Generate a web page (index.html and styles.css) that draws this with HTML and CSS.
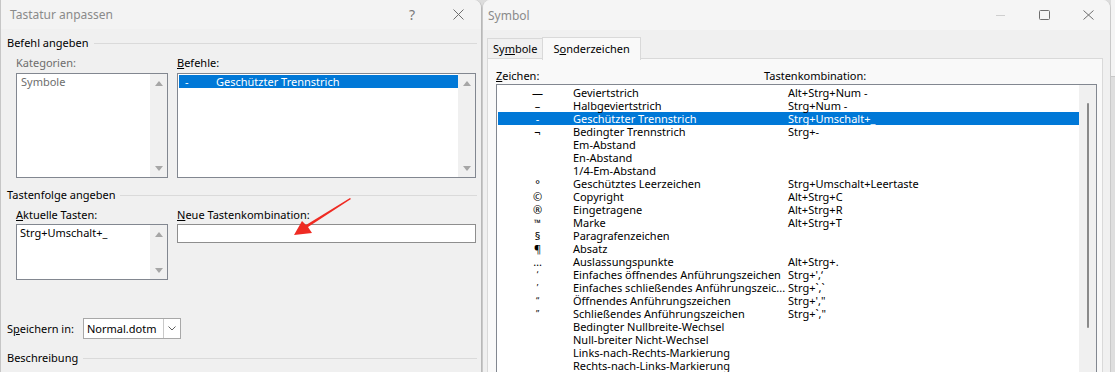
FILE: index.html
```html
<!DOCTYPE html>
<html lang="de">
<head>
    <meta charset="UTF-8">
    <title>Tastatur anpassen / Symbol</title>
    <link rel="stylesheet" href="styles.css">
</head>
<body>
<div class="screen">
    <section class="dlg keys">
        <header class="titlebar">
            <span class="title">Tastatur anpassen</span>
            <span class="tb-btn help">?</span>
            <span class="tb-btn">
                <svg width="11" height="11" viewBox="0 0 11 11"><path d="M0.5 0.5L10.5 10.5M10.5 0.5L0.5 10.5" stroke="#6e6e6e" stroke-width="1"/></svg>
            </span>
        </header>
        <div class="keys-body">
            <div class="group">Befehl angeben</div>
            <div class="cols top-cols">
                <div class="field">
                    <div class="lbl dim">Kategorien:</div>
                    <div class="listbox tall">
                        <div class="items"><div class="item dim pad">Symbole</div></div>
                        <div class="vscroll"><span class="arrow up"></span><span class="arrow down"></span></div>
                    </div>
                </div>
                <div class="field">
                    <div class="lbl"><u>B</u>efehle:</div>
                    <div class="listbox tall">
                        <div class="items">
                            <div class="item sel cmd"><span class="cmd-sym">-</span>Geschützter Trennstrich</div>
                        </div>
                        <div class="vscroll"><span class="arrow up"></span><span class="arrow down"></span></div>
                    </div>
                </div>
            </div>

            <div class="group second">Tastenfolge angeben</div>
            <div class="cols bottom-cols">
                <div class="field">
                    <div class="lbl"><u>A</u>ktuelle Tasten:</div>
                    <div class="listbox short">
                        <div class="items"><div class="item cur">Strg+Umschalt+_</div></div>
                        <div class="vscroll"><span class="arrow up"></span><span class="arrow down"></span></div>
                    </div>
                </div>
                <div class="field">
                    <div class="lbl"><u>N</u>eue Tastenkombination:</div>
                    <div class="textbox"></div>
                </div>
            </div>

            <div class="save-row">
                <span class="save-lbl">S<u>p</u>eichern in:</span>
                <div class="combo">
                    <span class="combo-val">Normal.dotm</span>
                    <span class="combo-btn">
                        <svg width="8" height="5" viewBox="0 0 8 5"><path d="M0.5 0.5L4 4L7.5 0.5" fill="none" stroke="#606060" stroke-width="1"/></svg>
                    </span>
                </div>
            </div>

            <div class="group third">Beschreibung</div>
        </div>
    </section>

    <section class="dlg sym">
        <header class="titlebar">
            <span class="title">Symbol</span>
            <span class="tb-btn min"><span class="dash"></span></span>
            <span class="tb-btn">
                <svg width="11" height="10" viewBox="0 0 11 10"><rect x="0.5" y="0.5" width="10" height="9" rx="1" fill="none" stroke="#6e6e6e"/></svg>
            </span>
            <span class="tb-btn">
                <svg width="11" height="10" viewBox="0 0 11 10"><path d="M0.5 0.5L10.5 9.5M10.5 0.5L0.5 9.5" stroke="#6e6e6e" stroke-width="1"/></svg>
            </span>
        </header>
        <div class="tabs">
            <span class="tab">Sy<u>m</u>bole</span>
            <span class="tab active">S<u>o</u>nderzeichen</span>
        </div>
        <div class="panel">
            <div class="panel-labels">
                <span><u>Z</u>eichen:</span>
                <span>Tastenkombination:</span>
            </div>
            <div class="charlist">
                <div class="rows">
                    <div class="row"><span class="c">—</span><span class="n">Geviertstrich</span><span>Alt+Strg+Num -</span></div>
                    <div class="row"><span class="c">–</span><span class="n">Halbgeviertstrich</span><span>Strg+Num -</span></div>
                    <div class="row sel"><span class="c">-</span><span class="n">Geschützter Trennstrich</span><span>Strg+Umschalt+_</span></div>
                    <div class="row"><span class="c">¬</span><span class="n">Bedingter Trennstrich</span><span>Strg+-</span></div>
                    <div class="row"><span class="c"></span><span class="n">Em-Abstand</span><span></span></div>
                    <div class="row"><span class="c"></span><span class="n">En-Abstand</span><span></span></div>
                    <div class="row"><span class="c"></span><span class="n">1/4-Em-Abstand</span><span></span></div>
                    <div class="row"><span class="c">°</span><span class="n">Geschütztes Leerzeichen</span><span>Strg+Umschalt+Leertaste</span></div>
                    <div class="row"><span class="c">©</span><span class="n">Copyright</span><span>Alt+Strg+C</span></div>
                    <div class="row"><span class="c">®</span><span class="n">Eingetragene</span><span>Alt+Strg+R</span></div>
                    <div class="row"><span class="c small">™</span><span class="n">Marke</span><span>Alt+Strg+T</span></div>
                    <div class="row"><span class="c">§</span><span class="n">Paragrafenzeichen</span><span></span></div>
                    <div class="row"><span class="c">¶</span><span class="n">Absatz</span><span></span></div>
                    <div class="row"><span class="c">…</span><span class="n">Auslassungspunkte</span><span>Alt+Strg+.</span></div>
                    <div class="row"><span class="c small">‘</span><span class="n">Einfaches öffnendes Anführungszeichen</span><span>Strg+',&#8216;</span></div>
                    <div class="row"><span class="c small">’</span><span class="n">Einfaches schließendes Anführungszeic...</span><span>Strg+`,`</span></div>
                    <div class="row"><span class="c small">“</span><span class="n">Öffnendes Anführungszeichen</span><span>Strg+',"</span></div>
                    <div class="row"><span class="c small">”</span><span class="n">Schließendes Anführungszeichen</span><span>Strg+`,"</span></div>
                    <div class="row"><span class="c"></span><span class="n">Bedingter Nullbreite-Wechsel</span><span></span></div>
                    <div class="row"><span class="c"></span><span class="n">Null-breiter Nicht-Wechsel</span><span></span></div>
                    <div class="row"><span class="c"></span><span class="n">Links-nach-Rechts-Markierung</span><span></span></div>
                    <div class="row"><span class="c"></span><span class="n">Rechts-nach-Links-Markierung</span><span></span></div>
                </div>
                <div class="sb"><div class="thumb"></div></div>
            </div>
        </div>
    </section>

    <div class="edge">
        <div class="edge-top"></div>
        <div class="edge-bottom"></div>
    </div>

    <!-- red annotation arrow drawn over the dialog -->
    <svg class="annot" width="70" height="45" viewBox="0 0 70 45">
        <polygon points="4,41 12,27 16,31 60,4 61,5 18,33 22,39" fill="#ef2b23"/>
    </svg>
</div>
</body>
</html>
```

FILE: styles.css
```css
* {
    box-sizing: border-box;
}
body {
    margin: 0;
    width: 1115px;
    height: 372px;
    overflow: hidden;
    background: #dcdcdc;
    font-family: "Noto Sans", "Open Sans", sans-serif;
    font-size: 11px;
    color: #000;
}
u {
    text-decoration: underline;
    text-underline-offset: 1px;
}
.screen {
    display: flex;
    height: 372px;
    position: relative;
}
.dlg {
    background: #f0f0f0;
    height: 372px;
    display: flex;
    flex-direction: column;
    overflow: hidden;
}

/* title bars */
.titlebar {
    height: 29px;
    flex: none;
    display: flex;
    align-items: center;
    background: #f3f3f3;
}
.title {
    flex: 1;
    color: #8a8a8a;
    font-size: 12px;
}
.tb-btn {
    width: 46px;
    height: 29px;
    display: flex;
    align-items: center;
    justify-content: center;
    color: #7a7a7a;
    font-size: 14px;
}

/* Tastatur anpassen */
.keys {
    width: 482px;
    border-left: 1px solid #c6c6c6;
    border-right: 1px solid #b8b8b8;
    border-top-right-radius: 8px;
}
.keys .title {
    padding-left: 9px;
}
.keys-body {
    padding: 0 4px 0 6px;
}
.group {
    display: flex;
    align-items: center;
    gap: 5px;
    height: 16px;
    line-height: 16px;
    margin-top: 6px;
}
.group::after {
    content: "";
    flex: 1;
    border-top: 1px solid #dadada;
}
.group.second {
    margin-top: 9px;
}
.group.third {
    margin-top: 11px;
}
.cols {
    display: grid;
    grid-template-columns: 152px 299px;
    gap: 9px;
    margin-left: 9px;
    align-items: start;
}
.top-cols {
    margin-top: 4px;
}
.bottom-cols {
    margin-top: 4px;
}
.lbl {
    height: 16px;
    line-height: 16px;
}
.top-cols .lbl {
    margin-bottom: 2px;
}
.bottom-cols .lbl {
    margin-bottom: 1px;
}
.dim {
    color: #6d6d6d;
}
.listbox {
    background: #fff;
    border: 1px solid #828790;
    display: flex;
}
.listbox.tall {
    height: 105px;
}
.listbox.short {
    height: 56px;
}
.items {
    flex: 1;
    padding: 1px 0 0 0;
}
.item {
    height: 13px;
    line-height: 13px;
    white-space: nowrap;
}
.item.pad {
    padding-left: 4px;
}
.item.cur {
    padding-left: 3px;
}
.item.sel {
    background: #0078d7;
    color: #fff;
    margin-left: 1px;
}
.cmd-sym {
    display: inline-block;
    width: 37px;
    padding-left: 6px;
}
.vscroll {
    width: 17px;
    background: #f0f0f0;
    display: flex;
    flex-direction: column;
    justify-content: space-between;
    align-items: center;
    padding: 7px 0 6px;
}
.arrow {
    width: 0;
    height: 0;
    border-left: 4px solid transparent;
    border-right: 4px solid transparent;
}
.arrow.up {
    border-bottom: 5px solid #a6a6a6;
}
.arrow.down {
    border-top: 5px solid #a6a6a6;
}
.textbox {
    height: 19px;
    background: #fff;
    border: 1px solid #8e8e8e;
}
.save-row {
    display: flex;
    align-items: center;
    margin-top: 38px;
    height: 21px;
}
.save-lbl {
    width: 76px;
}
.combo {
    width: 98px;
    height: 21px;
    display: flex;
    background: #fff;
    border: 1px solid #a8a8a8;
}
.combo-val {
    flex: 1;
    line-height: 19px;
    padding-left: 3px;
}
.combo-btn {
    width: 17px;
    border-left: 1px solid #c9c9c9;
    display: flex;
    align-items: center;
    justify-content: center;
}

/* Symbol */
.sym {
    width: 629px;
    border-left: 1px solid #c9c9c9;
    border-right: 1px solid #c9c9c9;
    border-radius: 8px 8px 0 0;
}
.sym .titlebar {
    height: 30px;
    background: #f5f5f5;
}
.sym .title {
    padding-left: 5px;
}
.sym .tb-btn {
    width: 44px;
    height: 30px;
}
.dash {
    width: 9px;
    border-top: 1px solid #cfcfcf;
}
.tabs {
    display: flex;
    align-items: flex-end;
    padding: 7px 0 0 4px;
    height: 29px;
    flex: none;
    position: relative;
    z-index: 1;
}
.tab {
    height: 20px;
    line-height: 19px;
    padding: 0 5px;
    border: 1px solid #d9d9d9;
    border-bottom: none;
    background: #f0f0f0;
    margin-bottom: 1px;
}
.tab.active {
    height: 23px;
    line-height: 22px;
    padding: 0 10px;
    background: #f9f9f9;
    margin-bottom: -1px;
    margin-left: -1px;
}
.panel {
    flex: 1;
    margin: -1px 7px 0 4px;
    border: 1px solid #d9d9d9;
    border-bottom: none;
    background: #f9f9f9;
    padding: 9px 5px 0 8px;
    display: flex;
    flex-direction: column;
}
.panel-labels {
    display: grid;
    grid-template-columns: 268px auto;
    height: 16px;
    line-height: 16px;
}
.charlist {
    flex: 1;
    display: flex;
    background: #fff;
    border: 1px solid #828790;
    border-bottom: none;
}
.rows {
    flex: 1;
    padding: 1px 0 0 1px;
}
.row {
    display: grid;
    grid-template-columns: 75px 215px 1fr;
    height: 13px;
    line-height: 13px;
    white-space: nowrap;
}
.row.sel {
    background: #0078d7;
    color: #fff;
}
.row .c {
    text-align: center;
    padding-left: 4px;
}
.row .c.small {
    font-size: 9px;
}
.sb {
    width: 17px;
    background: #f0f0f0;
    padding: 18px 0 0 8px;
}
.thumb {
    width: 2px;
    height: 225px;
    background: #8a8a8a;
    border-radius: 1px;
}

/* window behind, at the right edge */
.edge {
    width: 4px;
    display: flex;
    flex-direction: column;
}
.edge-top {
    height: 77px;
    background: #f4f4f4;
    border-bottom: 1px solid #c8c8c8;
}
.edge-bottom {
    flex: 1;
    background: #dedede;
}

.annot {
    position: absolute;
    left: 290px;
    top: 194px;
}
```
